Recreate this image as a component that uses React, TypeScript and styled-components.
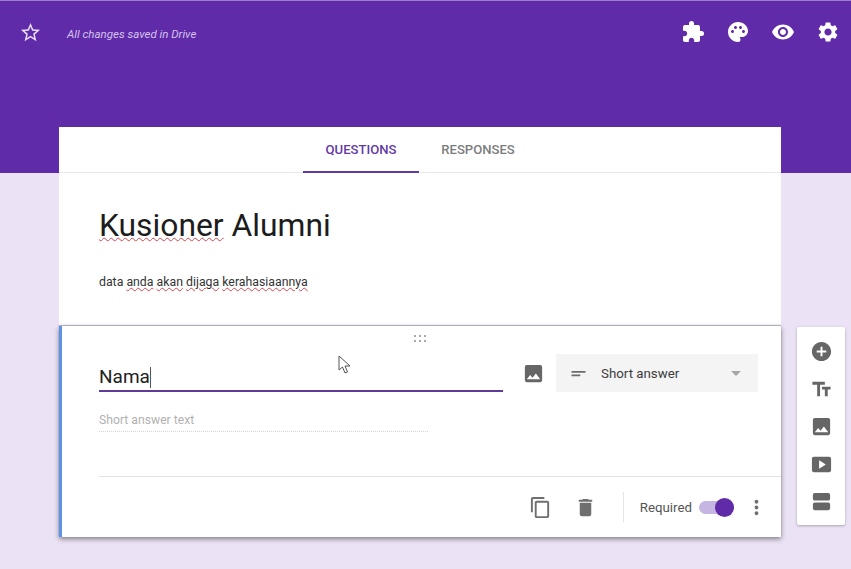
import React from "react";
import styled, { createGlobalStyle } from "styled-components";
import {
  MdAddCircle,
  MdArrowDropDown,
  MdContentCopy,
  MdDelete,
  MdExtension,
  MdImage,
  MdMoreVert,
  MdPalette,
  MdSettings,
  MdShortText,
  MdSmartDisplay,
  MdStarBorder,
  MdTextFields,
  MdViewAgenda,
  MdVisibility,
} from "react-icons/md";

const GlobalStyle = createGlobalStyle`
  html, body {
    margin: 0;
    padding: 0;
    background: #ebe3f5;
    font-family: Roboto, "Liberation Sans", sans-serif;
  }
  * { box-sizing: border-box; }
`;

const Page = styled.div`
  position: relative;
  width: 851px;
  height: 569px;
  overflow: hidden;
`;

const Banner = styled.header`
  height: 173px;
  background: #5f2ba8;
  border-top: 1px solid #9c7cc9;
  padding: 17px 11px 0 19px;
  display: flex;
  align-items: flex-start;
  justify-content: space-between;
`;

const BannerLeft = styled.div`
  display: flex;
  align-items: center;
  gap: 25px;
  color: #e9dcf8;
  height: 28px;
`;

const SavedNote = styled.span`
  padding-top: 3px;
  font-size: 11.5px;
  font-style: italic;
  color: #d6c2ee;
`;

const BannerRight = styled.div`
  display: flex;
  align-items: center;
  gap: 21px;
  color: #fff;
  height: 28px;
`;

const Content = styled.div`
  margin-top: -46px;
  padding-left: 59px;
  display: flex;
  align-items: flex-start;
  gap: 16px;
`;

const Column = styled.main`
  width: 722px;
`;

const TopCard = styled.section`
  background: #fff;
  height: 198px;
`;

const Tabs = styled.nav`
  height: 46px;
  display: flex;
  justify-content: center;
  border-bottom: 1px solid #e8e8e8;
`;

const Tab = styled.div<{ $active?: boolean }>`
  width: ${(p) => (p.$active ? "116px" : "118px")};
  height: 46px;
  display: flex;
  align-items: center;
  justify-content: center;
  padding-top: 1px;
  font-size: 13.1px;
  font-weight: 500;
  color: ${(p) => (p.$active ? "#643aa6" : "#7d7d7d")};
  border-bottom: 2px solid ${(p) => (p.$active ? "#643aa6" : "transparent")};
`;

const Intro = styled.div`
  padding: 33px 40px 0;
`;

const Title = styled.h1`
  margin: 0;
  font-size: 31.8px;
  line-height: 38px;
  font-weight: 400;
  color: #1c1c1c;
`;

const Description = styled.p`
  margin: 30px 0 0;
  font-size: 12.3px;
  line-height: 16px;
  color: #333;
`;

const Misspelled = styled.span`
  text-decoration: underline wavy #d9434e 1px;
  text-underline-offset: 1px;
`;

const QuestionCard = styled.section`
  position: relative;
  margin-top: 1px;
  height: 211px;
  background: #fff;
  border-left: 3px solid #5c93e6;
  box-shadow: 0 2px 5px rgba(0, 0, 0, 0.45), 0 -1px 1px rgba(0, 0, 0, 0.18);
  display: flex;
  flex-direction: column;
`;

const DragHandle = styled.svg`
  display: block;
  margin: 8px 0 0 351px;
`;

const QuestionBody = styled.div`
  display: flex;
  align-items: flex-start;
  padding: 11px 0 0 37px;
  height: 133px;
`;

const QuestionMain = styled.div`
  width: 404px;
`;

const QuestionInput = styled.div`
  height: 38px;
  border-bottom: 2px solid #5d3a9b;
  display: flex;
  align-items: flex-end;
  padding-bottom: 1px;
  font-size: 19px;
  line-height: 24px;
  color: #222;
`;

const Caret = styled.span`
  display: inline-block;
  width: 1px;
  height: 21px;
  background: #555;
  margin-bottom: 1px;
`;

const AnswerHint = styled.div`
  width: 329px;
  margin-top: 20px;
  height: 20px;
  font-size: 12.2px;
  line-height: 16px;
  color: #b2b2b2;
  border-bottom: 1px dotted #d6d6d6;
`;

const ImageButton = styled.div`
  width: 53px;
  height: 38px;
  padding-left: 7px;
  display: flex;
  align-items: center;
  justify-content: center;
  color: #666;
`;

const TypeSelect = styled.div`
  width: 202px;
  height: 38px;
  background: #f4f4f4;
  display: flex;
  align-items: center;
  padding: 0 10px 0 12px;
  color: #6b6b6b;
`;

const TypeLabel = styled.span`
  flex: 1;
  margin-left: 12px;
  font-size: 13.3px;
  font-weight: 400;
  color: #3c3c3c;
`;

const Footer = styled.div`
  margin-left: 37px;
  flex: 1;
  border-top: 1px solid #e2e2e2;
  display: flex;
  align-items: center;
  justify-content: flex-end;
  padding: 0 13px 0 0;
  color: #6f6f6f;
`;

const FooterIcons = styled.div`
  display: flex;
  align-items: center;
  gap: 22px;
  margin-right: 26px;
`;

const Divider = styled.div`
  width: 1px;
  height: 30px;
  background: #e4e4e4;
  margin-right: 16px;
`;

const RequiredLabel = styled.span`
  font-size: 13.3px;
  font-weight: 400;
  color: #555;
  margin-right: 7px;
`;

const Toggle = styled.div`
  position: relative;
  width: 35px;
  height: 13px;
  border-radius: 7px;
  background: #c5b5e2;
  margin-right: 11px;
`;

const ToggleKnob = styled.div`
  position: absolute;
  right: 0;
  top: -3px;
  width: 19px;
  height: 19px;
  border-radius: 50%;
  background: #5f2ba8;
`;

const SideBar = styled.aside`
  width: 48px;
  height: 198px;
  margin-top: 200px;
  background: #fff;
  border-radius: 2px;
  box-shadow: 0 1px 3px rgba(0, 0, 0, 0.28);
  display: flex;
  flex-direction: column;
  align-items: center;
  justify-content: space-between;
  padding: 13px 0 12px;
  color: #666;
`;

const Pointer = styled.svg`
  position: absolute;
  left: 338px;
  top: 355px;
`;

export default function App() {
  return (
    <Page>
      <GlobalStyle />
      <Banner>
        <BannerLeft>
          <MdStarBorder size={23} />
          <SavedNote>All changes saved in Drive</SavedNote>
        </BannerLeft>
        <BannerRight>
          <MdExtension size={24} />
          <MdPalette size={24} />
          <MdVisibility size={24} />
          <MdSettings size={24} />
        </BannerRight>
      </Banner>
      <Content>
        <Column>
          <TopCard>
            <Tabs>
              <Tab $active>QUESTIONS</Tab>
              <Tab>RESPONSES</Tab>
            </Tabs>
            <Intro>
              <Title>
                <Misspelled>Kusioner</Misspelled> Alumni
              </Title>
              <Description>
                data <Misspelled>anda</Misspelled> <Misspelled>akan</Misspelled>{" "}
                <Misspelled>dijaga</Misspelled>{" "}
                <Misspelled>kerahasiaannya</Misspelled>
              </Description>
            </Intro>
          </TopCard>
          <QuestionCard>
            <DragHandle width="16" height="9" viewBox="0 0 16 9" fill="#a8a8a8">
              <rect x="1" y="1" width="2" height="2" />
              <rect x="6" y="1" width="2" height="2" />
              <rect x="11" y="1" width="2" height="2" />
              <rect x="1" y="6" width="2" height="2" />
              <rect x="6" y="6" width="2" height="2" />
              <rect x="11" y="6" width="2" height="2" />
            </DragHandle>
            <QuestionBody>
              <QuestionMain>
                <QuestionInput>
                  Nama
                  <Caret />
                </QuestionInput>
                <AnswerHint>Short answer text</AnswerHint>
              </QuestionMain>
              <ImageButton>
                <MdImage size={23} />
              </ImageButton>
              <TypeSelect>
                <MdShortText size={21} />
                <TypeLabel>Short answer</TypeLabel>
                <MdArrowDropDown size={24} color="#a6a6a6" />
              </TypeSelect>
            </QuestionBody>
            <Footer>
              <FooterIcons>
                <MdContentCopy size={23} />
                <MdDelete size={23} />
              </FooterIcons>
              <Divider />
              <RequiredLabel>Required</RequiredLabel>
              <Toggle>
                <ToggleKnob />
              </Toggle>
              <MdMoreVert size={23} />
            </Footer>
          </QuestionCard>
        </Column>
        <SideBar>
          <MdAddCircle size={23} />
          <MdTextFields size={23} />
          <MdImage size={23} />
          <MdSmartDisplay size={23} />
          <MdViewAgenda size={23} />
        </SideBar>
      </Content>
      <Pointer width="14" height="20" viewBox="0 0 14 20">
        <path
          d="M1 1 L1 15 L4.5 12 L7 18 L9.5 17 L7 11 L12 11 Z"
          fill="#fff"
          stroke="#555"
          strokeWidth="1"
        />
      </Pointer>
    </Page>
  );
}
